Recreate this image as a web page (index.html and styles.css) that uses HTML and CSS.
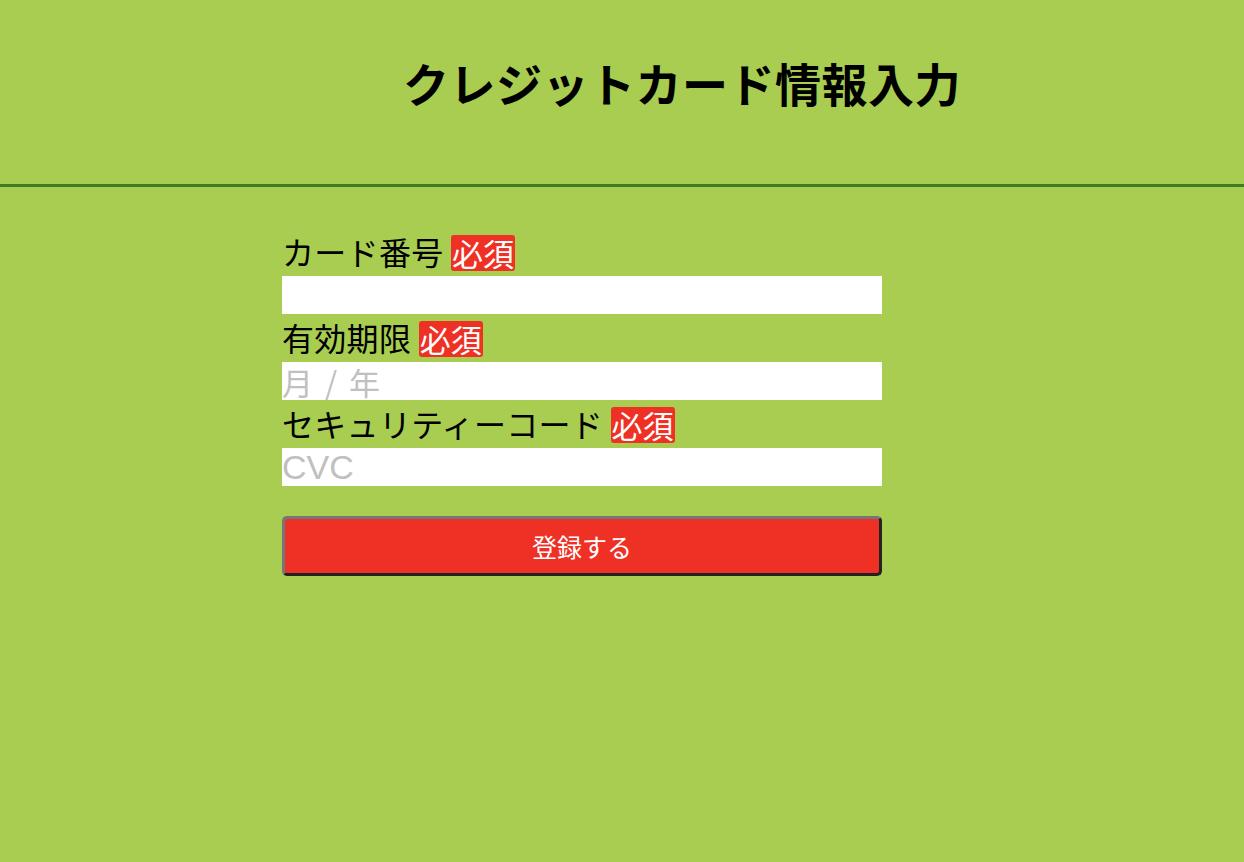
FILE: index.html
```html
<!DOCTYPE html>
<html lang="ja">
<head>
<meta charset="utf-8">
<title>クレジットカード情報入力</title>
<link rel="stylesheet" href="styles.css">
</head>
<body>
<header class="header">
  <h1 class="title">クレジットカード情報入力</h1>
</header>
<form class="card-form">
  <label class="field-label">カード番号 <span class="badge">必須</span></label>
  <input class="field-input" type="text">
  <label class="field-label">有効期限 <span class="badge">必須</span></label>
  <input class="field-input field-input-cjk" type="text" placeholder="月 / 年">
  <label class="field-label">セキュリティーコード <span class="badge">必須</span></label>
  <input class="field-input" type="text" placeholder="CVC">
  <button class="submit" type="button">登録する</button>
</form>
</body>
</html>
```
FILE: styles.css
```css
html, body {
  margin: 0;
  padding: 0;
}
body {
  background: #a8cd50;
  font-family: "Noto Sans CJK JP", "Noto Sans", sans-serif;
  color: #000;
  min-height: 862px;
}
.header {
  height: 184px;
  border-bottom: 3px solid #3a7d23;
  box-sizing: content-box;
  padding-left: 120px;
  display: flex;
  justify-content: center;
}
.title {
  margin: 58px 0 0;
  font-size: 46px;
  line-height: 48px;
  font-weight: 700;
  letter-spacing: 0.5px;
}
.card-form {
  width: 600px;
  margin: 41px 0 0 282px;
  display: flex;
  flex-direction: column;
}
.field-label {
  display: block;
  font-size: 32px;
  line-height: 46px;
  height: 48px;
  white-space: nowrap;
  letter-spacing: 0.3px;
}
.badge {
  display: inline-block;
  background: #ee3124;
  color: #fff;
  border-radius: 3px;
  font-size: 31px;
  line-height: 36px;
  height: 36px;
  padding: 0 1px;
  letter-spacing: 0;
  vertical-align: -1px;
}
.field-input {
  display: block;
  width: 600px;
  height: 38px;
  box-sizing: border-box;
  border: none;
  padding: 0;
  margin: 0;
  background: #fff;
  font-family: "Liberation Sans", "Noto Sans CJK JP", sans-serif;
  font-size: 34px;
  outline: none;
}
.field-input-cjk {
  font-family: "Noto Sans CJK JP", sans-serif;
  font-size: 31px;
}
.field-input::placeholder {
  color: #c0c0c0;
}
.field-input-cjk::placeholder {
  word-spacing: 5px;
}
.submit {
  margin-top: 30px;
  width: 600px;
  height: 60px;
  box-sizing: border-box;
  background: #ee3124;
  color: #fff;
  font-family: "Noto Sans CJK JP", sans-serif;
  font-size: 25px;
  border-style: solid;
  border-width: 3px;
  border-color: #767676 #222 #222 #767676;
  border-radius: 5px;
  padding: 0;
  cursor: pointer;
}
```
